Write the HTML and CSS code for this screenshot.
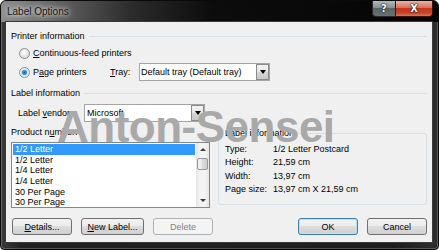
FILE: index.html
```html
<!DOCTYPE html>
<html lang="en">
<head>
    <meta charset="UTF-8">
    <meta name="viewport" content="width=device-width, initial-scale=1.0">
    <title>Label Options</title>
    <link rel="stylesheet" href="styles.css">
</head>
<body>

    <div class="window">
        <div class="titlebar">
            <span class="title">Label Options</span>
            <div class="caption">
                <span class="cap-help">?</span>
                <span class="cap-close">X</span>
            </div>
        </div>

        <div class="frame">
            <div class="client">
                <div class="section-head">Printer information</div>

                <div class="radio-row">
                    <span class="radio-label">
                        <span class="radio"></span>
                        <span><u>C</u>ontinuous-feed printers</span>
                    </span>
                </div>

                <div class="radio-row page-row">
                    <span class="radio-label page">
                        <span class="radio on"></span>
                        <span>P<u>a</u>ge printers</span>
                    </span>
                    <span class="tray-label"><u>T</u>ray:</span>
                    <div class="combo tray">
                        <span class="combo-value">Default tray (Default tray)</span>
                        <span class="combo-arrow"></span>
                    </div>
                </div>

                <div class="section-head second">Label information</div>

                <div class="vendor-row">
                    <span class="vendor-label">Label <u>v</u>endors:</span>
                    <div class="combo vendor">
                        <span class="combo-value">Microsoft</span>
                        <span class="combo-arrow"></span>
                    </div>
                </div>

                <div class="bottom">
                    <div class="products">
                        <div class="products-label">Product n<u>u</u>mber:</div>
                        <div class="listbox">
                            <div class="list-items">
                                <div class="list-item selected">1/2 Letter</div>
                                <div class="list-item">1/2 Letter</div>
                                <div class="list-item">1/4 Letter</div>
                                <div class="list-item">1/4 Letter</div>
                                <div class="list-item">30 Per Page</div>
                                <div class="list-item">30 Per Page</div>
                            </div>
                            <div class="scrollbar">
                                <span class="sb-btn up"></span>
                                <span class="sb-thumb"></span>
                                <span class="sb-track"></span>
                                <span class="sb-btn down"></span>
                            </div>
                        </div>
                    </div>

                    <div class="info">
                        <div class="info-title">Label information</div>
                        <div class="info-rows">
                            <span>Type:</span><span>1/2 Letter Postcard</span>
                            <span>Height:</span><span>21,59 cm</span>
                            <span>Width:</span><span>13,97 cm</span>
                            <span>Page size:</span><span>13,97 cm X 21,59 cm</span>
                        </div>
                    </div>
                </div>

                <div class="buttons">
                    <span class="btn first"><u>D</u>etails...</span>
                    <span class="btn wide"><u>N</u>ew Label...</span>
                    <span class="btn disabled">Delete</span>
                    <span class="btn default">OK</span>
                    <span class="btn">Cancel</span>
                </div>
            </div>
        </div>

        <div class="watermark">Anton-Sensei</div>
    </div>

</body>
</html>
```

FILE: styles.css
```css
/* Reset */
* {
    margin: 0;
    padding: 0;
    box-sizing: border-box;
}

body {
    font-family: "Liberation Sans", Arial, sans-serif;
    font-size: 9px;
    color: #000;
    background: #fff;
}

u {
    text-decoration: underline;
    text-underline-offset: 1px;
}

/* Marco de la ventana (Aero oscuro) */
.window {
    position: relative;
    width: 439px;
    height: 250px;
    display: flex;
    flex-direction: column;
    background: linear-gradient(90deg, #3a3a3a, #222 20px, #1c1c1c 90%, #2e2e2e);
    border: 1px solid #0a0a0a;
    border-radius: 6px 6px 4px 4px;
    box-shadow: inset 0 0 0 1px rgba(255, 255, 255, 0.22);
    overflow: hidden;
}

.titlebar {
    height: 21px;
    display: flex;
    align-items: flex-start;
    background: linear-gradient(90deg, #8e8e8e 0, #6a6a6a 45px, #2c2c2c 130px, #0c0c0c 210px, #050505 100%);
    border-radius: 5px 5px 0 0;
}

.title {
    margin: 5px 0 0 6px;
    font-size: 10px;
    line-height: 12px;
    color: #141414;
    text-shadow: 0 0 4px #fff, 0 0 8px rgba(255, 255, 255, 0.8);
}

.caption {
    margin-left: auto;
    margin-right: 5px;
    display: flex;
    height: 16px;
}

.cap-help,
.cap-close {
    display: flex;
    align-items: center;
    justify-content: center;
    color: #fff;
    font-family: "DejaVu Sans", sans-serif;
    font-weight: bold;
    text-shadow: 0 0 2px #000, 0 0 1px #000;
}

.cap-help {
    width: 23px;
    font-size: 10px;
    border: 1px solid #2a2a2a;
    border-top: none;
    border-right: none;
    border-radius: 0 0 0 4px;
    background: linear-gradient(#b4bbbd, #858e91 45%, #5a6467 50%, #667275 100%);
}

.cap-close {
    width: 38px;
    font-size: 10px;
    border: 1px solid #3a1510;
    border-top: none;
    border-radius: 0 0 4px 0;
    background: linear-gradient(#eab2a2, #d7705a 45%, #c3381e 50%, #c5442a 80%, #dd7556 100%);
}

.frame {
    flex: 1;
    display: flex;
    padding: 0 6px 7px 5px;
}

/* Área de cliente */
.client {
    flex: 1;
    display: flex;
    flex-direction: column;
    padding: 8px 5px 0 5px;
    background: #f0f0f0;
    box-shadow: 0 0 0 1px #3a3a3a;
}

.section-head {
    display: flex;
    align-items: center;
    gap: 4px;
    height: 12px;
    line-height: 12px;
    white-space: nowrap;
}

.section-head::after {
    content: "";
    flex: 1;
    height: 1px;
    background: #d5dfe5;
}

.section-head.second {
    margin-top: 6px;
}

.radio-row {
    display: flex;
    align-items: center;
    height: 14px;
    margin-top: 4px;
    padding-left: 8px;
}

.radio-row.page-row {
    height: 18px;
    margin-top: 3px;
}

.radio-label {
    display: flex;
    align-items: center;
    gap: 3px;
}

.radio-label.page {
    width: 91px;
}

.radio {
    width: 11px;
    height: 11px;
    border-radius: 50%;
    border: 1px solid #8e8f8f;
    background: radial-gradient(circle at 45% 40%, #fff 0, #ececec 3px, #d4d7da 6px);
}

.radio.on {
    background: radial-gradient(circle, #1d66be 0, #3f9be3 2.2px, #bfe2f8 3px, #eef1f3 4px, #d2d5d8 6px);
}

.tray-label {
    width: 29px;
}

/* Combos */
.combo {
    display: flex;
    height: 18px;
    border: 1px solid #a5a5a5;
    background: #fff;
}

.combo.tray {
    width: 131px;
}

.combo.vendor {
    width: 121px;
}

.combo-value {
    flex: 1;
    padding-left: 1px;
    line-height: 16px;
    white-space: nowrap;
    overflow: hidden;
}

.combo.vendor .combo-value {
    padding-left: 2px;
}

.combo-arrow {
    width: 13px;
    margin: 0 0 0 0;
    border: 1px solid #8a8a8a;
    background: linear-gradient(#f4f4f4, #e6e6e6 50%, #d5d5d5 50%, #c8c8c8);
    display: flex;
    align-items: center;
    justify-content: center;
}

.combo-arrow::before {
    content: "";
    border-left: 3.5px solid transparent;
    border-right: 3.5px solid transparent;
    border-top: 4px solid #000;
}

.vendor-row {
    display: flex;
    align-items: center;
    height: 18px;
    margin-top: 5px;
    padding-left: 7px;
}

.vendor-label {
    width: 66px;
}

/* Parte inferior: lista y datos */
.bottom {
    display: flex;
    gap: 8px;
    margin-top: 4px;
}

.products {
    width: 199px;
    display: flex;
    flex-direction: column;
}

.products-label {
    height: 12px;
    line-height: 12px;
}

.listbox {
    height: 66px;
    margin-top: 4px;
    display: flex;
    border: 1px solid #828790;
    background: #fff;
}

.list-items {
    flex: 1;
    padding: 1px;
    overflow: hidden;
}

.list-item {
    height: 10.7px;
    line-height: 10.7px;
    padding-left: 2px;
    white-space: nowrap;
}

.list-item.selected {
    background: #3399ff;
    color: #fff;
}

.scrollbar {
    width: 13px;
    display: flex;
    flex-direction: column;
    background: linear-gradient(90deg, #e4e4e4, #f4f4f4 30%, #f4f4f4 70%, #e4e4e4);
}

.sb-btn {
    height: 13px;
    display: flex;
    align-items: center;
    justify-content: center;
}

.sb-btn.up::before {
    content: "";
    border-left: 3px solid transparent;
    border-right: 3px solid transparent;
    border-bottom: 3px solid #3c3c3c;
}

.sb-btn.down::before {
    content: "";
    border-left: 3px solid transparent;
    border-right: 3px solid transparent;
    border-top: 3px solid #3c3c3c;
}

.sb-thumb {
    height: 12px;
    margin: 2px 1px 0 1px;
    border: 1px solid #979797;
    border-radius: 2px;
    background: linear-gradient(90deg, #f3f3f3, #e8e8e8 50%, #d9d9d9 50%, #cfcfcf);
}

.sb-track {
    flex: 1;
}

.info {
    flex: 1;
    height: 72px;
    margin-top: 7px;
    padding: 0 6px;
    border: 1px solid #d5dfe5;
    border-radius: 3px;
}

.info-title {
    width: max-content;
    height: 12px;
    line-height: 12px;
    margin: -7px 0 0 -2px;
    padding: 0 2px;
    background: #f0f0f0;
}

.info-rows {
    display: grid;
    grid-template-columns: 48px 1fr;
    margin-top: 4px;
    line-height: 13.3px;
    white-space: nowrap;
}

/* Botones */
.buttons {
    display: flex;
    gap: 9px;
    margin-top: 10px;
}

.btn {
    width: 60px;
    height: 17px;
    display: flex;
    align-items: center;
    justify-content: center;
    border: 1px solid #707070;
    border-radius: 3px;
    background: linear-gradient(#f2f2f2, #ebebeb 50%, #dddddd 50%, #cfcfcf);
    white-space: nowrap;
}

.btn.first {
    margin-left: 1px;
}

.btn.wide {
    width: 63px;
}

.btn.disabled {
    border-color: #adb2b5;
    background: #f4f4f4;
    color: #838383;
}

.btn.default {
    margin-left: auto;
    border-color: #3c7fb1;
    box-shadow: inset 0 0 0 1px #b5e3f8;
}

/* Marca de agua superpuesta */
.watermark {
    position: absolute;
    left: 56px;
    top: 104px;
    font-family: "Liberation Sans", Arial, sans-serif;
    font-weight: bold;
    font-size: 44px;
    line-height: 44px;
    letter-spacing: -0.5px;
    color: #a9a9a9;
    white-space: nowrap;
    pointer-events: none;
}
```
